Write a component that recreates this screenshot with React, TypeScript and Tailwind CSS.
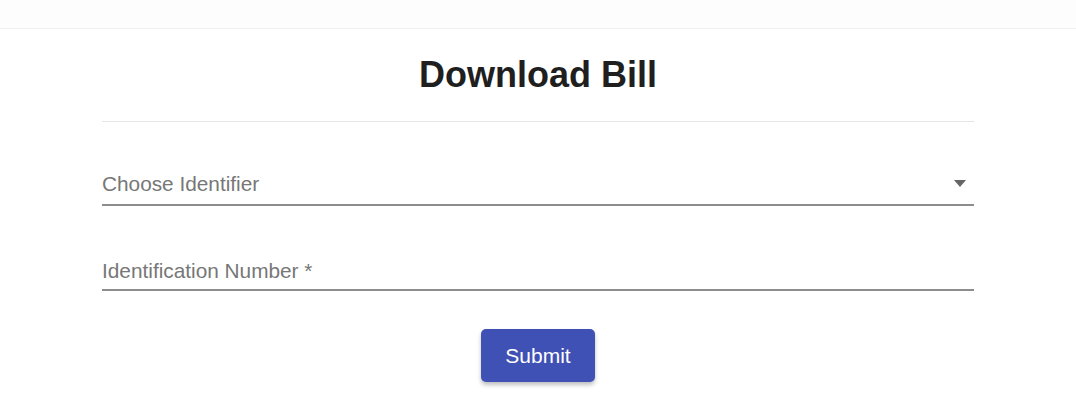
export default function App() {
  return (
    <div className="min-h-screen bg-white font-['Liberation_Sans',Arial,sans-serif]">
      <div className="h-[29px] border-b border-[#f0f0f0] bg-[#fdfdfd]" />

      <div className="mx-auto w-[872px]">
        <h1 className="pt-[26px] pb-[26px] text-center text-[36px] font-bold leading-[40px] text-[#1f1f1f]">
          Download Bill
        </h1>
        <div className="h-px bg-[#e6e6e6]" />

        <div className="mt-[40px] flex h-[44px] items-center justify-between border-b-[2px] border-[#8d8d8d]">
          <span className="pt-[2px] text-[20.8px] text-[#777]">Choose Identifier</span>
          <svg width="12" height="7" viewBox="0 0 12 7" className="mr-[8px]">
            <path d="M0 0h12L6 7z" fill="#666" />
          </svg>
        </div>

        <div className="mt-[40px] flex h-[45px] items-center border-b-[2px] border-[#8d8d8d]">
          <span className="pt-[6px] text-[20.8px] text-[#777]">Identification Number *</span>
        </div>

        <div className="mt-[38px] flex justify-center">
          <button
            type="button"
            className="h-[53px] w-[114px] rounded-[5px] bg-[#3f51b5] text-[21px] text-white shadow-[0_3px_4px_rgba(0,0,0,0.25)]"
          >
            Submit
          </button>
        </div>
      </div>
    </div>
  );
}
